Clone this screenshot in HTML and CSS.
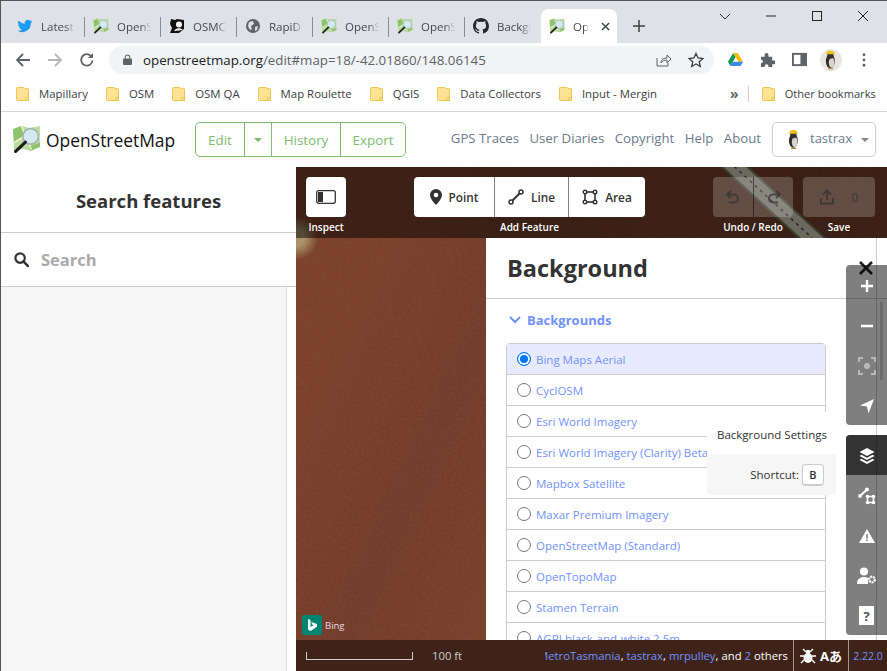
FILE: index.html
```html
<!DOCTYPE html>
<html lang="en">
<head>
  <meta charset="UTF-8" />
  <meta name="viewport" content="width=device-width, initial-scale=1" />
  <title>OpenStreetMap - Edit</title>
  <link rel="stylesheet" href="styles.css">
</head>
<body>
  <svg class="defs" width="0" height="0">
    <symbol id="osm" viewBox="0 0 28 28">
      <path d="M1 4l8-3 8 2 10-2 0 19-9 5-8-2-8 4z" fill="#b9dd9e"/>
      <path d="M1 4l8-3 2 9-9 6zM17 21l10-4v4l-9 4z" fill="#8cc46c"/>
      <path d="M9 1l10 23M2 17l9-5 16-1" stroke="#eef4cf" stroke-width="1.200" fill="none"/>
      <circle cx="18" cy="11" r="7.500" fill="#d3e9ee" stroke="#a3b5ae" stroke-width="1.600"/>
      <path d="M13 16.500L3.500 25.500" stroke="#1d1d1d" stroke-width="3" stroke-linecap="round"/>
    </symbol>
    <symbol id="folder" viewBox="0 0 14 15">
      <path d="M.5 1.500a1 1 0 0 1 1-1h7l1 1h3a1 1 0 0 1 1 1v11a1 1 0 0 1-1 1h-11a1 1 0 0 1-1-1z" fill="#fde293" stroke="#e8c24a"/>
      <rect x="10.500" y="11.500" width="3" height="3" fill="#fde293" stroke="#e8c24a"/>
    </symbol>
    <symbol id="penguin" viewBox="0 0 22 30">
      <ellipse cx="10" cy="17" rx="7" ry="11" fill="#2b2a2a"/>
      <ellipse cx="12" cy="19" rx="4.500" ry="8" fill="#d9d5cc"/>
      <circle cx="10" cy="8" r="5" fill="#333"/>
      <path d="M3 6a7 6 0 0 1 14 0z" fill="#efbf1c"/>
      <path d="M7 28h7l1 2H6z" fill="#b9802c"/>
    </symbol>
    <filter id="grain" x="0" y="0" width="100%" height="100%">
      <feTurbulence type="fractalNoise" baseFrequency=".35" numOctaves="2" seed="4"/>
      <feColorMatrix values="0 0 0 0 .25  0 0 0 0 .1  0 0 0 0 .05  1.400 0 0 0 -.45"/>
    </filter>
  </svg>

  <div class="tabstrip">
    <div class="tab sep">
      <svg class="fav" viewBox="0 0 24 24"><path d="M23 5c-.8.400-1.700.600-2.600.700.900-.600 1.600-1.400 2-2.500-.9.500-1.900.900-2.900 1.100A4.600 4.600 0 0 0 11.600 8.500 13 13 0 0 1 2.200 3.700a4.600 4.600 0 0 0 1.400 6.100c-.7 0-1.400-.2-2-.6 0 2.200 1.600 4.100 3.700 4.600-.7.200-1.400.2-2.100.1.600 1.800 2.300 3.200 4.300 3.200A9.300 9.300 0 0 1 .8 19a13 13 0 0 0 20-11.600c.9-.6 1.700-1.400 2.200-2.400z" fill="#1d9bf0"/></svg>
      <span class="tab-name">Latest t</span>
    </div>
    <div class="tab sep"><svg class="fav"><use href="#osm"/></svg><span class="tab-name">OpenS</span></div>
    <div class="tab sep">
      <svg class="fav" viewBox="0 0 16 16"><path d="M2 1l4 1 2-1 7 1v9l-5 4H1l2-5-2-4z" fill="#111"/><circle cx="10" cy="6.500" r="3" fill="#fff"/><path d="M5 13a5 4 0 0 1 9-1z" fill="#fff"/></svg>
      <span class="tab-name">OSMCh</span>
    </div>
    <div class="tab sep">
      <svg class="fav" viewBox="0 0 16 16"><circle cx="8" cy="8" r="7" fill="#5f6368"/><path d="M4 4l4-1 1 3-3 2 1 3-2 1-2-4zM10 9l3-1-1 4-2 1z" fill="#dee1e6"/></svg>
      <span class="tab-name">RapiD -</span>
    </div>
    <div class="tab sep"><svg class="fav"><use href="#osm"/></svg><span class="tab-name">OpenS</span></div>
    <div class="tab sep"><svg class="fav"><use href="#osm"/></svg><span class="tab-name">OpenS</span></div>
    <div class="tab">
      <svg class="fav" viewBox="0 0 16 16"><path d="M8 0C3.600 0 0 3.600 0 8c0 3.500 2.300 6.500 5.500 7.600.4.100.5-.2.500-.4v-1.400c-2.200.5-2.700-1-2.700-1-.4-.9-.9-1.200-.9-1.200-.7-.5.100-.5.100-.5.800.1 1.200.8 1.200.8.700 1.200 1.900.9 2.300.7.100-.5.300-.9.500-1.100-1.800-.2-3.600-.9-3.600-4 0-.9.300-1.600.8-2.100-.1-.2-.4-1 .1-2.100 0 0 .7-.2 2.200.8a7.500 7.500 0 0 1 4 0c1.500-1 2.200-.8 2.200-.8.400 1.100.2 1.900.1 2.100.5.600.8 1.300.8 2.100 0 3.100-1.900 3.700-3.700 3.900.3.300.6.800.6 1.500v2.200c0 .2.100.5.600.4A8 8 0 0 0 16 8c0-4.400-3.600-8-8-8z" fill="#24292f"/></svg>
      <span class="tab-name">Backgr</span>
    </div>
    <div class="tab active">
      <svg class="fav"><use href="#osm"/></svg>
      <span class="tab-name short">Ope</span>
      <svg class="tab-x" viewBox="0 0 10 10"><path d="M1 1l8 8M9 1l-8 8" stroke="#3c4043" stroke-width="1.500"/></svg>
    </div>
    <svg class="new-tab" viewBox="0 0 12 12"><path d="M6 0v12M0 6h12" stroke="#3c4043" stroke-width="1.500"/></svg>
    <div class="win-controls">
      <svg viewBox="0 0 12 12"><path d="M1 4l5 5 5-5" stroke="#333" fill="none"/></svg>
      <svg viewBox="0 0 12 12"><path d="M1 6h10" stroke="#222"/></svg>
      <svg viewBox="0 0 12 12"><rect x="1.500" y="1.500" width="9" height="9" stroke="#222" fill="none"/></svg>
      <svg viewBox="0 0 12 12"><path d="M1 1l10 10M11 1L1 11" stroke="#222"/></svg>
    </div>
  </div>

  <div class="toolbar">
    <svg class="nav-icon" viewBox="0 0 16 16"><path d="M15 8H2M8 2L2 8l6 6" stroke="#5f6368" stroke-width="1.800" fill="none"/></svg>
    <svg class="nav-icon" viewBox="0 0 16 16"><path d="M1 8h13M8 2l6 6-6 6" stroke="#b4b6b9" stroke-width="1.800" fill="none"/></svg>
    <svg class="nav-icon" viewBox="0 0 16 16"><path d="M13.500 8.500A5.700 5.700 0 1 1 12 4" stroke="#5f6368" stroke-width="1.800" fill="none"/><path d="M14 1v5H9z" fill="#5f6368"/></svg>
    <div class="omnibox">
      <svg class="lock" viewBox="0 0 10 12"><path d="M2.500 5V3.500a2.500 2.500 0 0 1 5 0V5" stroke="#5f6368" stroke-width="1.200" fill="none"/><rect y="5" width="10" height="7" rx="1" fill="#5f6368"/></svg>
      <span class="url"><b>openstreetmap.org</b>/edit#map=18/-42.01860/148.06145</span>
      <svg class="omni-icon" viewBox="0 0 16 16"><path d="M1 6v8h11v-3" stroke="#5f6368" fill="none"/><path d="M5 11c0-4 3-5 6-5V3l4 4-4 4V8c-3 0-5 1-6 3z" stroke="#5f6368" fill="none"/></svg>
      <svg class="omni-icon" viewBox="0 0 16 16"><path d="M8 1.500l2 4.500 4.900.500-3.700 3.200 1.100 4.800L8 12l-4.300 2.500 1.100-4.800L1.100 6.500 6 6z" stroke="#3c4043" stroke-width="1.300" fill="none"/></svg>
    </div>
    <div class="ext-icons">
      <svg viewBox="0 0 16 14"><path d="M5.500 0h5L16 9.500h-5z" fill="#fbbc04"/><path d="M5.500 0L0 9.500 2.500 14 8 4.500z" fill="#0f9d58"/><path d="M2.500 14h11l2.500-4.500H5z" fill="#4285f4"/></svg>
      <svg viewBox="0 0 16 16"><path d="M1 5h4V3a2 2 0 0 1 4 0v2h4v4h2a2 2 0 0 1 0 4h-2v3H9v-1a2 2 0 0 0-4 0v1H1v-4a2 2 0 0 0 0-4z" fill="#5f6368"/></svg>
      <svg viewBox="0 0 16 14"><rect x="1" y="1" width="14" height="12" stroke="#5f6368" stroke-width="2" fill="#fff"/><rect x="9" y="1" width="6" height="12" fill="#5f6368"/></svg>
      <span class="profile"><svg viewBox="0 0 22 30"><use href="#penguin"/></svg></span>
      <svg class="dots" viewBox="0 0 4 16"><circle cx="2" cy="2" r="1.600" fill="#5f6368"/><circle cx="2" cy="8" r="1.600" fill="#5f6368"/><circle cx="2" cy="14" r="1.600" fill="#5f6368"/></svg>
    </div>
  </div>

  <div class="bookmarks">
    <div class="bm"><svg><use href="#folder"/></svg>Mapillary</div>
    <div class="bm"><svg><use href="#folder"/></svg>OSM</div>
    <div class="bm"><svg><use href="#folder"/></svg>OSM QA</div>
    <div class="bm"><svg><use href="#folder"/></svg>Map Roulette</div>
    <div class="bm"><svg><use href="#folder"/></svg>QGIS</div>
    <div class="bm"><svg><use href="#folder"/></svg>Data Collectors</div>
    <div class="bm"><svg><use href="#folder"/></svg>Input - Mergin</div>
    <span class="bm-more">»</span>
    <div class="bm bm-other"><svg><use href="#folder"/></svg>Other bookmarks</div>
  </div>

  <header class="site-header">
    <div class="brand">
      <svg class="brand-logo"><use href="#osm"/></svg>
      <span>OpenStreetMap</span>
    </div>
    <div class="edit-group">
      <a class="eg-edit">Edit</a>
      <a class="eg-caret"><i class="caret caret-green"></i></a>
      <a class="eg-history">History</a>
      <a class="eg-export">Export</a>
    </div>
    <nav class="site-nav">
      <a>GPS Traces</a>
      <a>User Diaries</a>
      <a>Copyright</a>
      <a>Help</a>
      <a>About</a>
    </nav>
    <div class="user-btn">
      <svg class="user-pic" viewBox="0 0 22 30"><use href="#penguin"/></svg>
      <span class="user-name">tastrax</span>
      <i class="caret"></i>
    </div>
  </header>

  <main class="editor">
    <aside class="sidebar">
      <h2 class="side-title">Search features</h2>
      <div class="side-search">
        <svg class="search-icon" viewBox="0 0 16 16"><circle cx="6.500" cy="6.500" r="5" stroke="#333" stroke-width="2.400" fill="none"/><path d="M10 10l5 5" stroke="#333" stroke-width="2.800" stroke-linecap="round"/></svg>
        <span>Search</span>
      </div>
      <div class="side-rest"><div class="side-track"></div></div>
    </aside>

    <section class="map">
      <svg class="road" width="591" height="504">
        <rect width="591" height="504" filter="url(#grain)" opacity=".35"/>
        <path d="M428 -10L527 81" stroke="#71805a" stroke-width="19"/>
        <path d="M428 -10L527 81" stroke="#d6d0ba" stroke-width="15"/>
        <path d="M428 -10L527 81" stroke="#4a4438" stroke-width="1.500" stroke-dasharray="3 4"/>
      </svg>

      <div class="map-bar">
        <div class="tool-col">
          <div class="tool-btns">
            <button class="tool wide40">
              <svg viewBox="0 0 20 14" width="20" height="14"><rect x=".7" y=".7" width="18.600" height="12.600" rx="2" stroke="#333" stroke-width="1.300" fill="none"/><rect x="2" y="2" width="5" height="10" fill="#333"/></svg>
            </button>
          </div>
          <span class="tool-label">Inspect</span>
        </div>
        <div class="tool-col add-col">
          <div class="tool-btns">
            <button class="tool w80">
              <svg viewBox="0 0 12 16" width="12" height="16"><path d="M6 0a6 6 0 0 0-6 6c0 4 6 10 6 10s6-6 6-10a6 6 0 0 0-6-6zm0 8.300a2.300 2.300 0 1 1 0-4.600 2.300 2.300 0 0 1 0 4.600z" fill="#333"/></svg>
              Point
            </button>
            <button class="tool w74">
              <svg viewBox="0 0 16 16" width="16" height="16"><path d="M3 13L13 3" stroke="#333" stroke-width="2"/><circle cx="3" cy="13" r="2" stroke="#333" stroke-width="1.500" fill="#fff"/><circle cx="13" cy="3" r="2" stroke="#333" stroke-width="1.500" fill="#fff"/></svg>
              Line
            </button>
            <button class="tool w77">
              <svg viewBox="0 0 16 16" width="16" height="16"><rect x="3" y="3" width="10" height="10" stroke="#333" stroke-width="1.600" fill="none"/><g fill="#fff" stroke="#333" stroke-width="1.400"><circle cx="3" cy="3" r="1.800"/><circle cx="13" cy="3" r="1.800"/><circle cx="3" cy="13" r="1.800"/><circle cx="13" cy="13" r="1.800"/></g></svg>
              Area
            </button>
          </div>
          <span class="tool-label">Add Feature</span>
        </div>
        <div class="tool-col undo-col">
          <div class="tool-btns">
            <button class="tool ghost wide40">
              <svg viewBox="0 0 14 14" width="14" height="14"><path d="M5 1L1 4.500 5 8M1.500 4.500H8a4 4 0 0 1 0 8H3" stroke="#333" stroke-width="2" fill="none" opacity=".75"/></svg>
            </button>
            <button class="tool ghost wide40">
              <svg viewBox="0 0 14 14" width="14" height="14"><path d="M9 1l4 3.500L9 8M12.500 4.500H6a4 4 0 0 0 0 8h5" stroke="#333" stroke-width="2" fill="none" opacity=".75"/></svg>
            </button>
          </div>
          <span class="tool-label">Undo / Redo</span>
        </div>
        <div class="tool-col save-col">
          <div class="tool-btns">
            <button class="tool ghost w72">
              <svg viewBox="0 0 14 16" width="14" height="16"><path d="M7 11V2M3 5.500L7 1.500l4 4M1 9v5.500h12V9" stroke="#333" stroke-width="2" fill="none" opacity=".75"/></svg>
              <em class="save-count">0</em>
            </button>
          </div>
          <span class="tool-label">Save</span>
        </div>
      </div>

      <div class="map-body">
        <div class="bing-mark">
          <span class="bing-logo"><svg viewBox="0 0 12 14" width="12" height="14"><path d="M2 1l2.500 1v7l3-1.700-1.300-.8-.9-2.400 5.700 2v2.600L4.500 13 2 11.500z" fill="#fff"/></svg></span>
          Bing
        </div>

        <div class="panel">
          <div class="panel-head">
            <h2>Background</h2>
            <svg class="panel-close" viewBox="0 0 14 14"><path d="M1 1l12 12M13 1L1 13" stroke="#222" stroke-width="2.600"/></svg>
          </div>
          <div class="panel-body">
            <div class="section-title">
              <svg viewBox="0 0 12 8" width="12" height="8"><path d="M1 1l5 5 5-5" stroke="#7092ff" stroke-width="2" fill="none"/></svg>
              Backgrounds
            </div>
            <ul class="bg-list">
              <li class="selected"><i class="radio on"></i>Bing Maps Aerial</li>
              <li><i class="radio"></i>CyclOSM</li>
              <li><i class="radio"></i>Esri World Imagery</li>
              <li><i class="radio"></i>Esri World Imagery (Clarity) Beta</li>
              <li><i class="radio"></i>Mapbox Satellite</li>
              <li><i class="radio"></i>Maxar Premium Imagery</li>
              <li><i class="radio"></i>OpenStreetMap (Standard)</li>
              <li><i class="radio"></i>OpenTopoMap</li>
              <li><i class="radio"></i>Stamen Terrain</li>
              <li><i class="radio"></i>AGRI black-and-white 2.5m</li>
            </ul>
          </div>
          <div class="panel-scroll"><div class="panel-thumb"></div></div>
        </div>

        <div class="hint">
          <div class="hint-title">Background Settings</div>
          <div class="hint-keys">Shortcut: <kbd>B</kbd></div>
        </div>

        <div class="side-tools">
          <div class="tool-group">
            <div class="st"><svg viewBox="0 0 14 14" width="14" height="14"><path d="M7 1v12M1 7h12" stroke="#fff" stroke-width="2.400"/></svg></div>
            <div class="st"><svg viewBox="0 0 14 14" width="14" height="14"><path d="M1 7h12" stroke="#fff" stroke-width="2.400"/></svg></div>
            <div class="st"><svg viewBox="0 0 18 18" width="18" height="18"><path d="M1 5V1h4M13 1h4v4M17 13v4h-4M5 17H1v-4" stroke="#b9b9b9" stroke-width="2" fill="none"/><circle cx="9" cy="9" r="3" fill="#b9b9b9"/></svg></div>
            <div class="st"><svg viewBox="0 0 16 16" width="16" height="16"><path d="M15 1L1 7.500l7 1 1.500 7z" fill="#fff"/></svg></div>
          </div>
          <div class="tool-group">
            <div class="st st-on"><svg viewBox="0 0 16 16" width="16" height="16"><path d="M8 0l7.500 4L8 8 .5 4z" fill="#fff"/><path d="M2.500 6.800L.5 8 8 12l7.500-4-2-1.200L8 9.700z" fill="#fff"/><path d="M2.500 10.800L.5 12 8 16l7.500-4-2-1.200L8 13.700z" fill="#fff"/></svg></div>
            <div class="st"><svg viewBox="0 0 18 18" width="18" height="18"><path d="M2 9L9 2.500" stroke="#fff" stroke-width="2"/><circle cx="2" cy="9" r="1.900" fill="#fff"/><circle cx="9" cy="2.500" r="1.900" fill="#fff"/><rect x="9.500" y="9.500" width="6" height="6" stroke="#fff" stroke-width="1.600" fill="none"/><g fill="#fff"><circle cx="9.500" cy="9.500" r="1.800"/><circle cx="15.500" cy="9.500" r="1.800"/><circle cx="9.500" cy="15.500" r="1.800"/><circle cx="15.500" cy="15.500" r="1.800"/></g></svg></div>
            <div class="st"><svg viewBox="0 0 16 14" width="16" height="14"><path d="M8 0l8 14H0z" fill="#fff"/><path d="M8 5v4.500M8 10.500v1.500" stroke="#808080" stroke-width="1.600"/></svg></div>
            <div class="st"><svg viewBox="0 0 20 18" width="20" height="18"><circle cx="7" cy="4.500" r="4" fill="#fff"/><path d="M0 17c0-5 3-7 7-7 2 0 3 .5 4 1v6z" fill="#fff"/><circle cx="15" cy="12.500" r="2.800" stroke="#fff" stroke-width="2.200" stroke-dasharray="2 .8" fill="none"/></svg></div>
            <div class="st st-help"><span>?</span></div>
          </div>
        </div>
      </div>

      <footer class="map-foot">
        <div class="scale"><i class="scale-bar"></i><span>100 ft</span></div>
        <div class="attrib">
          <div class="clip"><span><a>MetroTasmania</a>, <a>tastrax</a>, <a>mrpulley</a>,</span></div>
          <span>and <a>2</a> others</span>
        </div>
        <div class="foot-icons">
          <svg viewBox="0 0 16 16" width="16" height="16"><ellipse cx="8" cy="10" rx="4.500" ry="5" fill="#fff"/><circle cx="8" cy="4" r="2.200" fill="#fff"/><path d="M3 1l3 3M13 1l-3 3M0 8h4M16 8h-4M1 15l3-3M15 15l-3-3" stroke="#fff" stroke-width="1.400"/></svg>
          <span class="lang">Aあ</span>
        </div>
        <a class="version">2.22.0</a>
      </footer>
    </section>
  </main>
</body>
</html>
```

FILE: styles.css
```css
* {
  box-sizing: border-box;
}

html, body {
  margin: 0;
  height: 100%;
  overflow: hidden;
}

body {
  font-family: "Open Sans", "Liberation Sans", sans-serif;
  display: flex;
  flex-direction: column;
  background-color: #fff;
  border-left: 1px solid #555;
  border-top: 1px solid #555;
  color: #333;
}

.defs {
  position: absolute;
}

/* browser chrome */
.tabstrip {
  height: 42px;
  flex: none;
  display: flex;
  align-items: flex-end;
  padding-left: 8px;
  background-color: #dee1e6;
}

.tab {
  width: 76px;
  height: 34px;
  flex: none;
  display: flex;
  align-items: center;
  gap: 8px;
  padding-left: 8px;
  position: relative;
}

.tab.sep::after {
  content: "";
  position: absolute;
  right: 0;
  top: 8px;
  height: 20px;
  width: 1px;
  background-color: #8a8d91;
}

.tab.active {
  background-color: #fff;
  border-radius: 8px 8px 0 0;
}

.fav {
  width: 16px;
  height: 16px;
  flex: none;
}

.tab-name {
  font-size: 11.500px;
  color: #45494e;
  width: 34px;
  overflow: hidden;
  white-space: nowrap;
  -webkit-mask-image: linear-gradient(to right, #000 70%, transparent);
  mask-image: linear-gradient(to right, #000 70%, transparent);
}

.tab-name.short {
  width: 16px;
}

.tab-x {
  width: 9px;
  height: 9px;
  margin-left: 4px;
}

.new-tab {
  width: 12px;
  height: 12px;
  margin: 0 0 11px 16px;
}

.win-controls {
  margin-left: auto;
  align-self: flex-start;
  display: flex;
  gap: 34px;
  padding: 9px 18px 0 0;
}

.win-controls svg {
  width: 12px;
  height: 12px;
}

.toolbar {
  height: 33px;
  flex: none;
  display: flex;
  align-items: center;
  padding-left: 14px;
  background-color: #fff;
}

.nav-icon {
  width: 16px;
  height: 16px;
  margin-right: 16px;
}

.omnibox {
  width: 605px;
  height: 28px;
  margin-left: -2px;
  display: flex;
  align-items: center;
  padding: 0 10px 0 14px;
  border-radius: 14px;
  background-color: #f1f3f4;
}

.lock {
  width: 9px;
  height: 11px;
  margin-right: 11px;
}

.url {
  font-size: 13.300px;
  color: #5f6368;
  flex: 1;
  white-space: nowrap;
}

.url b {
  font-weight: 400;
  color: #202124;
}

.omni-icon {
  width: 16px;
  height: 16px;
  margin-left: 16px;
}

.ext-icons {
  display: flex;
  align-items: center;
  margin-left: 14px;
  gap: 17px;
}

.ext-icons svg {
  width: 15px;
  height: 15px;
}

.profile {
  width: 22px;
  height: 22px;
  margin-left: -4px;
  border-radius: 50%;
  background-color: #e8e6e1;
  display: flex;
  align-items: center;
  justify-content: center;
}

.ext-icons .profile svg {
  width: 14px;
  height: 20px;
}

.ext-icons .dots {
  width: 4px;
  height: 14px;
  margin-left: 3px;
}

.bookmarks {
  height: 36px;
  flex: none;
  display: flex;
  align-items: center;
  padding-left: 15px;
  border-bottom: 1px solid #d5d5d5;
  font-size: 11.400px;
  color: #3c4043;
}

.bm {
  display: flex;
  align-items: center;
  gap: 10px;
  margin-right: 18px;
  white-space: nowrap;
}

.bm svg {
  width: 13px;
  height: 14px;
}

.bm-more {
  margin-left: 55px;
  font-size: 14px;
  font-weight: 700;
  color: #5f6368;
}

.bm-other {
  margin: 0 0 0 9px;
  padding-left: 13px;
  border-left: 1px solid #ccc;
  height: 16px;
  font-size: 11.100px;
}

/* osm site header */
.site-header {
  height: 55px;
  flex: none;
  display: flex;
  align-items: center;
  padding: 0 11px 0 11px;
}

.brand {
  display: flex;
  align-items: center;
  gap: 5px;
  width: 183px;
  font-size: 17.400px;
  color: #111;
}

.brand-logo {
  width: 29px;
  height: 29px;
}

.edit-group {
  width: 211px;
  height: 35px;
  display: flex;
  border: 1px solid #7ebc6f;
  border-radius: 5px;
  font-size: 13.400px;
  color: #7ebc6f;
}

.edit-group a {
  display: flex;
  align-items: center;
  justify-content: center;
  border-left: 1px solid #7ebc6f;
}

.eg-edit {
  width: 48px;
  border-left: 0 !important;
}

.eg-caret {
  width: 27px;
}

.eg-history {
  width: 69px;
}

.eg-export {
  flex: 1;
}

.caret {
  width: 0;
  height: 0;
  border: 4px solid transparent;
  border-top: 4px solid #888;
  border-bottom: 0;
}

.caret-green {
  border-top-color: #7ebc6f;
}

.site-nav {
  margin-left: auto;
  padding-bottom: 4px;
  display: flex;
  gap: 10.500px;
  font-size: 13.200px;
  color: #6c7a8c;
}

.user-btn {
  width: 104px;
  height: 35px;
  margin-left: 11px;
  display: flex;
  align-items: center;
  padding-left: 14px;
  gap: 9px;
  border: 1px solid #ccc;
  border-radius: 5px;
  font-size: 13px;
  color: #6c7a8c;
}

.user-name {
  padding-bottom: 4px;
}

.user-pic {
  width: 14px;
  height: 21px;
}

/* editor */
.editor {
  flex: 1;
  min-height: 0;
  display: flex;
}

.sidebar {
  width: 295px;
  flex: none;
  display: flex;
  flex-direction: column;
  background-color: #fff;
}

.side-title {
  height: 66px;
  margin: 0;
  padding-top: 2px;
  display: flex;
  align-items: center;
  justify-content: center;
  font-size: 18.500px;
  font-weight: 700;
  color: #333;
  border-bottom: 1px solid #ccc;
}

.side-search {
  height: 54px;
  display: flex;
  align-items: center;
  gap: 12px;
  padding-left: 13px;
  font-size: 16.500px;
  font-weight: 700;
  color: #aaa;
  border-bottom: 1px solid #ccc;
}

.search-icon {
  width: 15px;
  height: 15px;
}

.side-rest {
  flex: 1;
  background-color: #f6f6f6;
}

.side-track {
  width: 10px;
  height: 100%;
  margin-left: auto;
  background-color: #fff;
  border-left: 1px solid #ddd;
}

.map {
  flex: 1;
  min-width: 0;
  display: flex;
  flex-direction: column;
  position: relative;
  overflow: hidden;
  background-color: #7b412b;
  background-image:
    radial-gradient(circle at 0 71px, #b09a70 0, #b09a70 8px, transparent 22px),
    linear-gradient(115deg, transparent 15%, rgba(70, 40, 40, .18) 32%, transparent 50%, rgba(70, 40, 40, .12) 62%, transparent 80%);
}

.road {
  position: absolute;
  left: 0;
  top: 0;
}

.map-bar {
  height: 71px;
  flex: none;
  display: flex;
  position: relative;
  padding: 10px 11px 0 10px;
  background-color: rgba(0, 0, 0, .5);
}

.tool-col {
  display: flex;
  flex-direction: column;
  align-items: center;
}

.add-col {
  margin-left: 68px;
}

.undo-col {
  margin-left: 68px;
}

.save-col {
  margin-left: 10px;
}

.tool-btns {
  display: flex;
  border-radius: 4px;
  overflow: hidden;
}

.tool {
  height: 40px;
  padding: 0;
  border: 0;
  background-color: #fff;
  display: flex;
  align-items: center;
  justify-content: center;
  gap: 7px;
  font-family: inherit;
  font-size: 11.800px;
  font-weight: 600;
  color: #333;
}

.tool + .tool {
  border-left: 1px solid #808080;
}

.tool.ghost {
  background-color: rgba(255, 255, 255, .2);
}

.tool.ghost + .tool.ghost {
  border-left-color: rgba(0, 0, 0, .5);
}

.wide40 {
  width: 40px;
}

.w80 {
  width: 80px;
}

.w74 {
  width: 74px;
}

.w77 {
  width: 77px;
}

.w72 {
  width: 72px;
  gap: 18px;
}

.save-count {
  font-style: normal;
  opacity: .65;
}

.tool-label {
  margin-top: 3px;
  font-size: 10px;
  font-weight: 600;
  color: #fff;
}

.map-body {
  flex: 1;
  min-height: 0;
  display: flex;
  justify-content: flex-end;
  position: relative;
}

.bing-mark {
  position: absolute;
  left: 6px;
  bottom: 5px;
  display: flex;
  align-items: center;
  gap: 3px;
  font-size: 9.500px;
  color: #e8dbe8;
}

.bing-logo {
  width: 20px;
  height: 20px;
  border-radius: 2px;
  display: flex;
  align-items: center;
  justify-content: center;
  background-color: #008373;
}

.panel {
  width: 401px;
  height: 100%;
  position: relative;
  overflow: hidden;
  background-color: #fff;
}

.panel-head {
  height: 61px;
  display: flex;
  align-items: center;
  justify-content: space-between;
  padding: 0 13px 0 21px;
  border-bottom: 1px solid #ccc;
}

.panel-head h2 {
  margin: 0;
  font-size: 23.500px;
  font-weight: 700;
  color: #333;
}

.panel-close {
  width: 14px;
  height: 14px;
  margin-right: 1px;
}

.panel-body {
  padding: 12px 0 0 20px;
}

.section-title {
  display: flex;
  align-items: center;
  gap: 6px;
  padding-left: 3px;
  margin-bottom: 14px;
  font-size: 13px;
  font-weight: 700;
  color: #7092ff;
}

.bg-list {
  width: 320px;
  margin: 0;
  padding: 0;
  list-style: none;
  border: 1px solid #ccc;
  border-radius: 4px 4px 0 0;
}

.bg-list li {
  height: 31px;
  display: flex;
  align-items: center;
  gap: 5px;
  padding-left: 10px;
  font-size: 11.500px;
  color: #7092ff;
  border-bottom: 1px solid #ccc;
}

.bg-list li.selected {
  background-color: #e8ebff;
}

.radio {
  width: 14px;
  height: 14px;
  border: 1px solid #767676;
  border-radius: 50%;
  background-color: #fff;
  flex: none;
}

.radio.on {
  border-color: #0075ff;
  background-color: #0075ff;
  box-shadow: inset 0 0 0 2px #fff;
}

.panel-scroll {
  position: absolute;
  top: 0;
  bottom: 0;
  right: 10px;
  width: 1px;
  background-color: #ccc;
}

.panel-thumb {
  position: absolute;
  top: 64px;
  left: 4px;
  width: 3px;
  height: 78px;
  background-color: #ddd;
}

.hint {
  position: absolute;
  left: 411px;
  top: 174px;
  width: 129px;
  font-size: 11.500px;
  color: #333;
  border-radius: 4px;
  overflow: hidden;
}

.hint-title {
  height: 42px;
  padding-left: 10px;
  line-height: 46px;
  white-space: nowrap;
  background-color: #fff;
}

.hint-keys {
  height: 41px;
  display: flex;
  align-items: center;
  justify-content: flex-end;
  gap: 3px;
  padding-right: 12px;
  background-color: #f6f6f6;
}

kbd {
  width: 22px;
  height: 22px;
  display: flex;
  align-items: center;
  justify-content: center;
  font-family: inherit;
  font-size: 11px;
  font-weight: 600;
  background-color: #fff;
  border: 1px solid #ccc;
  border-bottom-width: 2px;
  border-radius: 4px;
}

.side-tools {
  position: absolute;
  right: 0;
  top: 27px;
  width: 41px;
  display: flex;
  flex-direction: column;
  gap: 10px;
}

.tool-group {
  display: flex;
  flex-direction: column;
  background-color: rgba(0, 0, 0, .5);
  border-radius: 4px 0 0 4px;
  overflow: hidden;
}

.st {
  height: 40px;
  padding-top: 1px;
  display: flex;
  align-items: center;
  justify-content: center;
}

.st-on {
  background-color: rgba(0, 0, 0, .6);
}

.st-help span {
  width: 15px;
  height: 19px;
  display: flex;
  align-items: center;
  justify-content: center;
  background-color: #fff;
  font-size: 13px;
  font-weight: 700;
  color: #555;
}

.map-foot {
  height: 31px;
  flex: none;
  display: flex;
  align-items: center;
  position: relative;
  padding-left: 10px;
  background-color: #3f2318;
  font-size: 11.300px;
  color: #fff;
}

.scale {
  display: flex;
  align-items: center;
  gap: 19px;
  color: #ccc;
}

.scale-bar {
  width: 107px;
  height: 8px;
  border: 1px solid #ccc;
  border-top: 0;
}

.attrib {
  margin-left: auto;
  padding-right: 5px;
  white-space: nowrap;
  display: flex;
  gap: 3px;
}

.attrib a,
.version {
  color: #7092ff;
}

.clip {
  width: 173px;
  display: flex;
  justify-content: flex-end;
  overflow: hidden;
}

.clip span {
  flex: none;
}

.foot-icons {
  width: 56px;
  height: 100%;
  display: flex;
  align-items: center;
  justify-content: center;
  gap: 4px;
  border-left: 1px solid #999;
  border-right: 1px solid #999;
}

.lang {
  font-family: "Open Sans", "Noto Sans CJK JP", sans-serif;
  font-size: 13px;
  font-weight: 700;
}

.version {
  width: 38px;
  font-size: 10.500px;
  text-align: center;
}
```
